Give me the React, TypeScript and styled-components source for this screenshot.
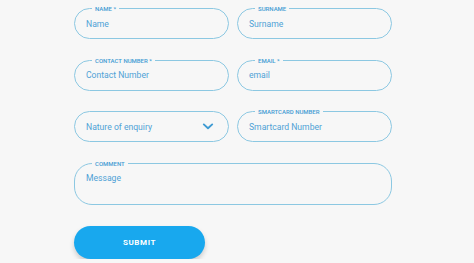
import styled, { createGlobalStyle } from 'styled-components'

const Global = createGlobalStyle`
  html, body {
    margin: 0;
    background: #f7f7f7;
    font-family: Roboto, "Liberation Sans", sans-serif;
  }
`

function App() {
  return (
    <>
      <Global />
      <Form>
        <Grid>
          <Field label="NAME *" placeholder="Name" />
          <Field label="SURNAME" placeholder="Surname" />
          <Field label="CONTACT NUMBER *" placeholder="Contact Number" />
          <Field label="EMAIL *" placeholder="email" />
          <Box>
            <Value>Nature of enquiry</Value>
            <svg width="12" height="7" viewBox="0 0 12 7">
              <path d="M1.8 1.4 L6 5.3 L10.2 1.4" fill="none" stroke="#3f9bd3" strokeWidth="1.9" strokeLinecap="round" strokeLinejoin="round" />
            </svg>
          </Box>
          <Field label="SMARTCARD NUMBER" placeholder="Smartcard Number" />
          <Field label="COMMENT" placeholder="Message" wide />
        </Grid>
        <Submit>SUBMIT</Submit>
      </Form>
    </>
  )
}

function Field({ label, placeholder, wide }: { label: string; placeholder: string; wide?: boolean }) {
  return (
    <Box $wide={wide}>
      <Label>{label}</Label>
      <Value>{placeholder}</Value>
    </Box>
  )
}

export default App

const Form = styled.div`
  padding: 8px 0 0 74px;
`

const Grid = styled.div`
  display: grid;
  grid-template-columns: 155px 155px;
  column-gap: 8px;
  row-gap: 20.5px;
  width: 318px;
`

const Box = styled.div<{ $wide?: boolean }>`
  position: relative;
  box-sizing: border-box;
  height: ${p => (p.$wide ? '42px' : '31px')};
  grid-column: ${p => (p.$wide ? '1 / 3' : 'auto')};
  border: 1.5px solid #8cc8e2;
  border-radius: ${p => (p.$wide ? '18px' : '16px')};
  padding: ${p => (p.$wide ? '9px 11px 0' : '0 11px')};
  display: flex;
  align-items: ${p => (p.$wide ? 'flex-start' : 'center')};
  justify-content: space-between;
  svg {
    margin-right: 3px;
  }
`

const Label = styled.span`
  position: absolute;
  top: -4px;
  left: 17px;
  padding: 0 3px;
  background: #f7f7f7;
  font-size: 6px;
  line-height: 7px;
  font-weight: 500;
  color: #3f9bd3;
  white-space: nowrap;
`

const Value = styled.span`
  font-size: 8.6px;
  color: #4fa2d6;
`

const Submit = styled.button`
  margin-top: 21px;
  width: 131px;
  height: 33px;
  border: 0;
  border-radius: 17px;
  background: #18a8ee;
  color: #fff;
  font-family: Roboto, "Liberation Sans", sans-serif;
  font-weight: 700;
  font-size: 8px;
  letter-spacing: 0.6px;
  box-shadow: 0 3px 5px rgba(0, 0, 0, 0.18);
`
